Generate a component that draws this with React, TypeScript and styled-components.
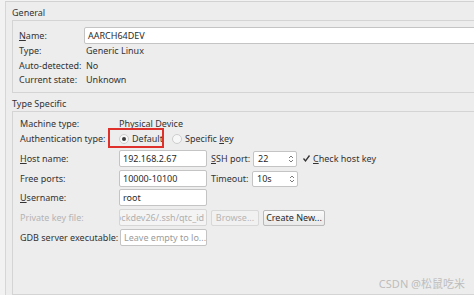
import React from "react";
import styled, { createGlobalStyle } from "styled-components";

const Global = createGlobalStyle`
  html, body { margin: 0; padding: 0; background: #f2f2f2; }
  body {
    font-family: "Noto Sans", "Noto Sans CJK SC", sans-serif;
    font-size: 9px;
    color: #333333;
  }
  * { box-sizing: border-box; }
`;

const Page = styled.div`
  position: relative;
  width: 474px;
  height: 295px;
  overflow: hidden;
  background: #f2f2f2;
  padding: 1px 0 0 5px;
`;

const Frame = styled.div`
  height: 100%;
  background: #ededed;
  border-top: 1px solid #d2d2d2;
  border-left: 1px solid #d6d6d6;
  padding-left: 6px;
  display: flex;
  flex-direction: column;
`;

const SectionTitle = styled.div`
  height: 18px;
  padding-top: 3px;
  line-height: 15px;
  color: #333333;
`;

const Group = styled.div<{ $grow?: boolean; $pad: string }>`
  border: 1px solid #d4d4d4;
  border-right: none;
  padding: ${(p) => p.$pad};
  flex: ${(p) => (p.$grow ? "1" : "none")};
  display: flex;
  flex-direction: column;
`;

const Row = styled.div<{ $h: number; $mt?: number }>`
  display: flex;
  align-items: center;
  height: ${(p) => p.$h}px;
  margin-top: ${(p) => p.$mt ?? 0}px;
  white-space: nowrap;
`;

const Label = styled.span<{ $w: number; $disabled?: boolean }>`
  width: ${(p) => p.$w}px;
  flex: none;
  color: ${(p) => (p.$disabled ? "#b4b4b4" : "#333333")};
`;

const Value = styled.span`
  color: #333333;
`;

const U = styled.span`
  text-decoration: underline;
  text-underline-offset: 1px;
`;

const Field = styled.div<{ $w?: number; $disabled?: boolean; $stretch?: boolean; $end?: boolean }>`
  height: 17px;
  width: ${(p) => (p.$w ? `${p.$w}px` : "auto")};
  flex: ${(p) => (p.$stretch ? "1" : "none")};
  margin-right: ${(p) => (p.$stretch ? "-6px" : "0")};
  background: ${(p) => (p.$disabled ? "#f4f4f4" : "#ffffff")};
  border: 1px solid ${(p) => (p.$disabled ? "#d6d6d6" : "#c4c4c4")};
  border-radius: 2px;
  padding: 0 ${(p) => (p.$end ? "2px" : "3px")} 0 3px;
  display: flex;
  align-items: center;
  justify-content: ${(p) => (p.$end ? "flex-end" : "flex-start")};
  overflow: hidden;
  white-space: nowrap;
  color: ${(p) => (p.$disabled ? "#b0b0b0" : "#2a2a2a")};
`;

const Placeholder = styled.span`
  color: #9c9c9c;
`;

const InlineLabel = styled.span<{ $w: number }>`
  width: ${(p) => p.$w}px;
  flex: none;
  margin-left: 4px;
`;

const Spin = styled.div<{ $w: number }>`
  width: ${(p) => p.$w}px;
  height: 16px;
  flex: none;
  background: #fff;
  border: 1px solid #c4c4c4;
  border-radius: 2px;
  padding: 0 2px 0 4px;
  display: flex;
  align-items: center;
  justify-content: space-between;
  color: #2a2a2a;
`;

const AuthField = styled.div`
  position: relative;
  display: flex;
  align-items: center;
  height: 100%;
`;

const RadioItem = styled.label<{ $ml?: number }>`
  display: flex;
  align-items: center;
  gap: 3px;
  margin-left: ${(p) => p.$ml ?? 0}px;
`;

const RadioCircle = styled.span<{ $checked?: boolean }>`
  width: 10px;
  height: 10px;
  border-radius: 50%;
  border: 1px solid #cdcdcd;
  background: #f7f7f7;
  display: flex;
  align-items: center;
  justify-content: center;
  &::after {
    content: "";
    width: 4px;
    height: 4px;
    border-radius: 50%;
    background: ${(p) => (p.$checked ? "#3a3a3a" : "transparent")};
  }
`;

const Highlight = styled.div`
  position: absolute;
  left: -11px;
  top: -2px;
  width: 56px;
  height: 20px;
  border: 2px solid #e0302c;
  pointer-events: none;
`;

const CheckItem = styled.label`
  display: flex;
  align-items: center;
  gap: 2px;
  margin-left: 4px;
`;

const CheckBox = styled.span`
  width: 10px;
  height: 10px;
  display: flex;
  align-items: center;
  justify-content: center;
`;

const Button = styled.button<{ $w: number; $disabled?: boolean; $ml?: number }>`
  width: ${(p) => p.$w}px;
  height: 16px;
  flex: none;
  margin-left: ${(p) => p.$ml ?? 4}px;
  padding: 0;
  font: inherit;
  border-radius: 2px;
  border: 1px solid ${(p) => (p.$disabled ? "#d8d8d8" : "#b9b9b9")};
  background: ${(p) =>
    p.$disabled ? "#f1f1f1" : "linear-gradient(#fafafa, #e9e9e9)"};
  color: ${(p) => (p.$disabled ? "#b6b6b6" : "#2a2a2a")};
`;

const Watermark = styled.div`
  position: absolute;
  right: 9px;
  bottom: 4px;
  line-height: 14px;
  font-size: 11px;
  color: #bdbdbd;
  font-family: "Noto Sans", "Noto Sans CJK SC", sans-serif;
`;

const Arrows = () => (
  <svg width="6" height="10" viewBox="0 0 6 10">
    <path d="M1 4 L3 2 L5 4" fill="none" stroke="#7a7a7a" strokeWidth="1" />
    <path d="M1 6 L3 8 L5 6" fill="none" stroke="#7a7a7a" strokeWidth="1" />
  </svg>
);

const CheckMark = () => (
  <svg width="9" height="9" viewBox="0 0 9 9">
    <path d="M1.5 4.5 L3.5 7 L7.5 1.5" fill="none" stroke="#333" strokeWidth="1.3" />
  </svg>
);

export default function App() {
  return (
    <>
      <Global />
      <Page>
        <Frame>
          <SectionTitle>General</SectionTitle>
          <Group $pad="6px 0 5px 6px">
            <Row $h={16}>
              <Label $w={65}>
                <U>N</U>ame:
              </Label>
              <Field $stretch>AARCH64DEV</Field>
            </Row>
            <Row $h={15}>
              <Label $w={67}>Type:</Label>
              <Value>Generic Linux</Value>
            </Row>
            <Row $h={14}>
              <Label $w={67}>Auto-detected:</Label>
              <Value>No</Value>
            </Row>
            <Row $h={15}>
              <Label $w={67}>Current state:</Label>
              <Value>Unknown</Value>
            </Row>
          </Group>
          <SectionTitle>Type Specific</SectionTitle>
          <Group $grow $pad="4px 0 0 7px">
            <Row $h={14}>
              <Label $w={99}>Machine type:</Label>
              <Value>Physical Device</Value>
            </Row>
            <Row $h={17}>
              <Label $w={99}>Authentication type:</Label>
              <AuthField>
                <Highlight />
                <RadioItem>
                  <RadioCircle $checked />
                  <span>Default</span>
                </RadioItem>
                <RadioItem $ml={9}>
                  <RadioCircle />
                  <span>
                    Specific <U>k</U>ey
                  </span>
                </RadioItem>
              </AuthField>
            </Row>
            <Row $h={17} $mt={3}>
              <Label $w={99}>
                <U>H</U>ost name:
              </Label>
              <Field $w={88}>192.168.2.67</Field>
              <InlineLabel $w={42}>
                <U>S</U>SH port:
              </InlineLabel>
              <Spin $w={44}>
                22
                <Arrows />
              </Spin>
              <CheckItem>
                <CheckBox>
                  <CheckMark />
                </CheckBox>
                <span>
                  <U>C</U>heck host key
                </span>
              </CheckItem>
            </Row>
            <Row $h={17} $mt={3}>
              <Label $w={99}>Free ports:</Label>
              <Field $w={88}>10000-10100</Field>
              <InlineLabel $w={41}>Timeout:</InlineLabel>
              <Spin $w={46}>
                10s
                <Arrows />
              </Spin>
            </Row>
            <Row $h={17} $mt={2}>
              <Label $w={99}>
                <U>U</U>sername:
              </Label>
              <Field $w={88}>root</Field>
            </Row>
            <Row $h={17} $mt={3}>
              <Label $w={99} $disabled>
                Private key file:
              </Label>
              <Field $w={88} $disabled $end>
                /home/rockdev26/.ssh/qtc_id
              </Field>
              <Button $w={48} $disabled $ml={4}>
                Browse...
              </Button>
              <Button $w={62} $ml={4}>
                Create New...
              </Button>
            </Row>
            <Row $h={17} $mt={3}>
              <Label $w={100}>GDB server executable:</Label>
              <Field $w={87}>
                <Placeholder>Leave empty to lo...</Placeholder>
              </Field>
            </Row>
          </Group>
        </Frame>
        <Watermark>CSDN @松鼠吃米</Watermark>
      </Page>
    </>
  );
}
